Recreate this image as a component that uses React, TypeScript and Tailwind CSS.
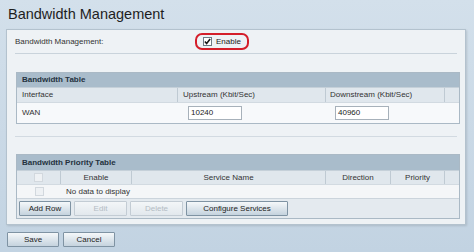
import React from 'react';

const font = { fontFamily: '"Liberation Sans", Arial, sans-serif' };

function Btn({ label, w, disabled }: { label: string; w: string; disabled?: boolean }) {
  return (
    <div
      className={`${w} h-[15px] flex items-center justify-center text-[8px] border rounded-[1px] ${
        disabled
          ? 'border-[#c3ccd4] bg-gradient-to-b from-[#f3f6f8] to-[#e2e8ed] text-[#b4bcc4]'
          : 'border-[#7f93a3] bg-gradient-to-b from-[#f5f8fa] to-[#c5d3de] text-[#222]'
      }`}
    >
      {label}
    </div>
  );
}

function Box({ checked, disabled }: { checked?: boolean; disabled?: boolean }) {
  return (
    <div
      className={`w-[9px] h-[9px] border flex items-center justify-center ${
        disabled ? 'border-[#d2d8de] bg-[#eef1f4]' : 'border-[#6d7a86] bg-white'
      }`}
    >
      {checked && (
        <svg width="7" height="7" viewBox="0 0 8 8">
          <path d="M1 4 L3 6.2 L7 1.2" stroke="#1a1a1a" strokeWidth="1.8" fill="none" />
        </svg>
      )}
    </div>
  );
}

export default function App() {
  return (
    <div
      style={font}
      className="w-[474px] h-[252px] overflow-hidden bg-gradient-to-b from-[#d3e0eb] to-[#c2d3e2] text-[#333]"
    >
      <div className="h-[29px] pl-[8px] pt-[6px] text-[14.5px] leading-[17px] text-[#1e1e1e]">
        Bandwidth Management
      </div>

      <div className="ml-[6px] w-[460px] h-[196px] bg-[#eef2f5] border border-[#b3c2ce] shadow-[1px_1px_2px_rgba(0,0,0,0.12)] px-[8px]">
        {/* enable row */}
        <div className="h-[23px] flex items-center">
          <div className="w-[180px] text-[8px] text-[#333]">Bandwidth Management:</div>
          <div className="flex items-center h-[17px] px-[6px] gap-[4px] border-2 border-[#d41e2a] rounded-[7px]">
            <Box checked />
            <span className="text-[8px] text-[#222]">Enable</span>
          </div>
        </div>
        <div className="h-px bg-[#c9d3db]" />

        {/* bandwidth table */}
        <div className="mt-[18px] ml-[1px] w-[444px] border border-[#aab9c5] text-[8px]">
          <div className="h-[14px] bg-[#a9bccb] font-bold text-[#24323e] pl-[5px] leading-[14px]">
            Bandwidth Table
          </div>
          <div className="h-[15px] flex bg-[#e0e7ed] border-t border-[#c5d0d9] text-[#333]">
            <div className="w-[161px] pl-[5px] border-r border-[#bfcad3] leading-[14px]">Interface</div>
            <div className="w-[148px] pl-[5px] border-r border-[#bfcad3] leading-[14px]">Upstream (Kbit/Sec)</div>
            <div className="w-[119px] pl-[4px] border-r border-[#bfcad3] leading-[14px]">Downstream (Kbit/Sec)</div>
            <div className="flex-1" />
          </div>
          <div className="h-[21px] flex items-center bg-[#f7f9fb] border-t border-[#d2dae1]">
            <div className="w-[161px] pl-[5px]">WAN</div>
            <div className="w-[148px] pl-[10px]">
              <div className="w-[54px] h-[14px] bg-white border border-[#a7b1ba] pl-[2px] leading-[12px] text-[#222]">10240</div>
            </div>
            <div className="w-[119px] pl-[9px]">
              <div className="w-[54px] h-[14px] bg-white border border-[#a7b1ba] pl-[2px] leading-[12px] text-[#222]">40960</div>
            </div>
          </div>
        </div>

        <div className="mt-[12px] h-px bg-[#d2dae1]" />

        {/* priority table */}
        <div className="mt-[17px] ml-[1px] w-[444px] border border-[#aab9c5] text-[8px]">
          <div className="h-[15px] bg-[#a9bccb] font-bold text-[#24323e] pl-[5px] leading-[15px]">
            Bandwidth Priority Table
          </div>
          <div className="h-[14px] flex bg-[#e0e7ed] border-t border-[#c5d0d9] text-[#333] text-center leading-[13px]">
            <div className="w-[44px] border-r border-[#bfcad3] flex items-center justify-center">
              <Box disabled />
            </div>
            <div className="w-[71px] border-r border-[#bfcad3]">Enable</div>
            <div className="w-[194px] border-r border-[#bfcad3]">Service Name</div>
            <div className="w-[65px] border-r border-[#bfcad3]">Direction</div>
            <div className="w-[54px] border-r border-[#bfcad3]">Priority</div>
            <div className="flex-1" />
          </div>
          <div className="h-[14px] flex items-center bg-[#f4f6f8] border-t border-[#d2dae1]">
            <div className="w-[44px] flex justify-center">
              <Box disabled />
            </div>
            <div className="pl-[5px] text-[#333]">No data to display</div>
          </div>
          <div className="h-[20px] flex items-center gap-[3px] pl-[2px] bg-[#e4eaef] border-t border-[#cbd4dc]">
            <Btn label="Add Row" w="w-[52px]" />
            <Btn label="Edit" w="w-[53px]" disabled />
            <Btn label="Delete" w="w-[53px]" disabled />
            <Btn label="Configure Services" w="w-[102px]" />
          </div>
        </div>
      </div>

      <div className="mt-[7px] ml-[7px] flex gap-[4px]">
        <Btn label="Save" w="w-[52px]" />
        <Btn label="Cancel" w="w-[52px]" />
      </div>
    </div>
  );
}
